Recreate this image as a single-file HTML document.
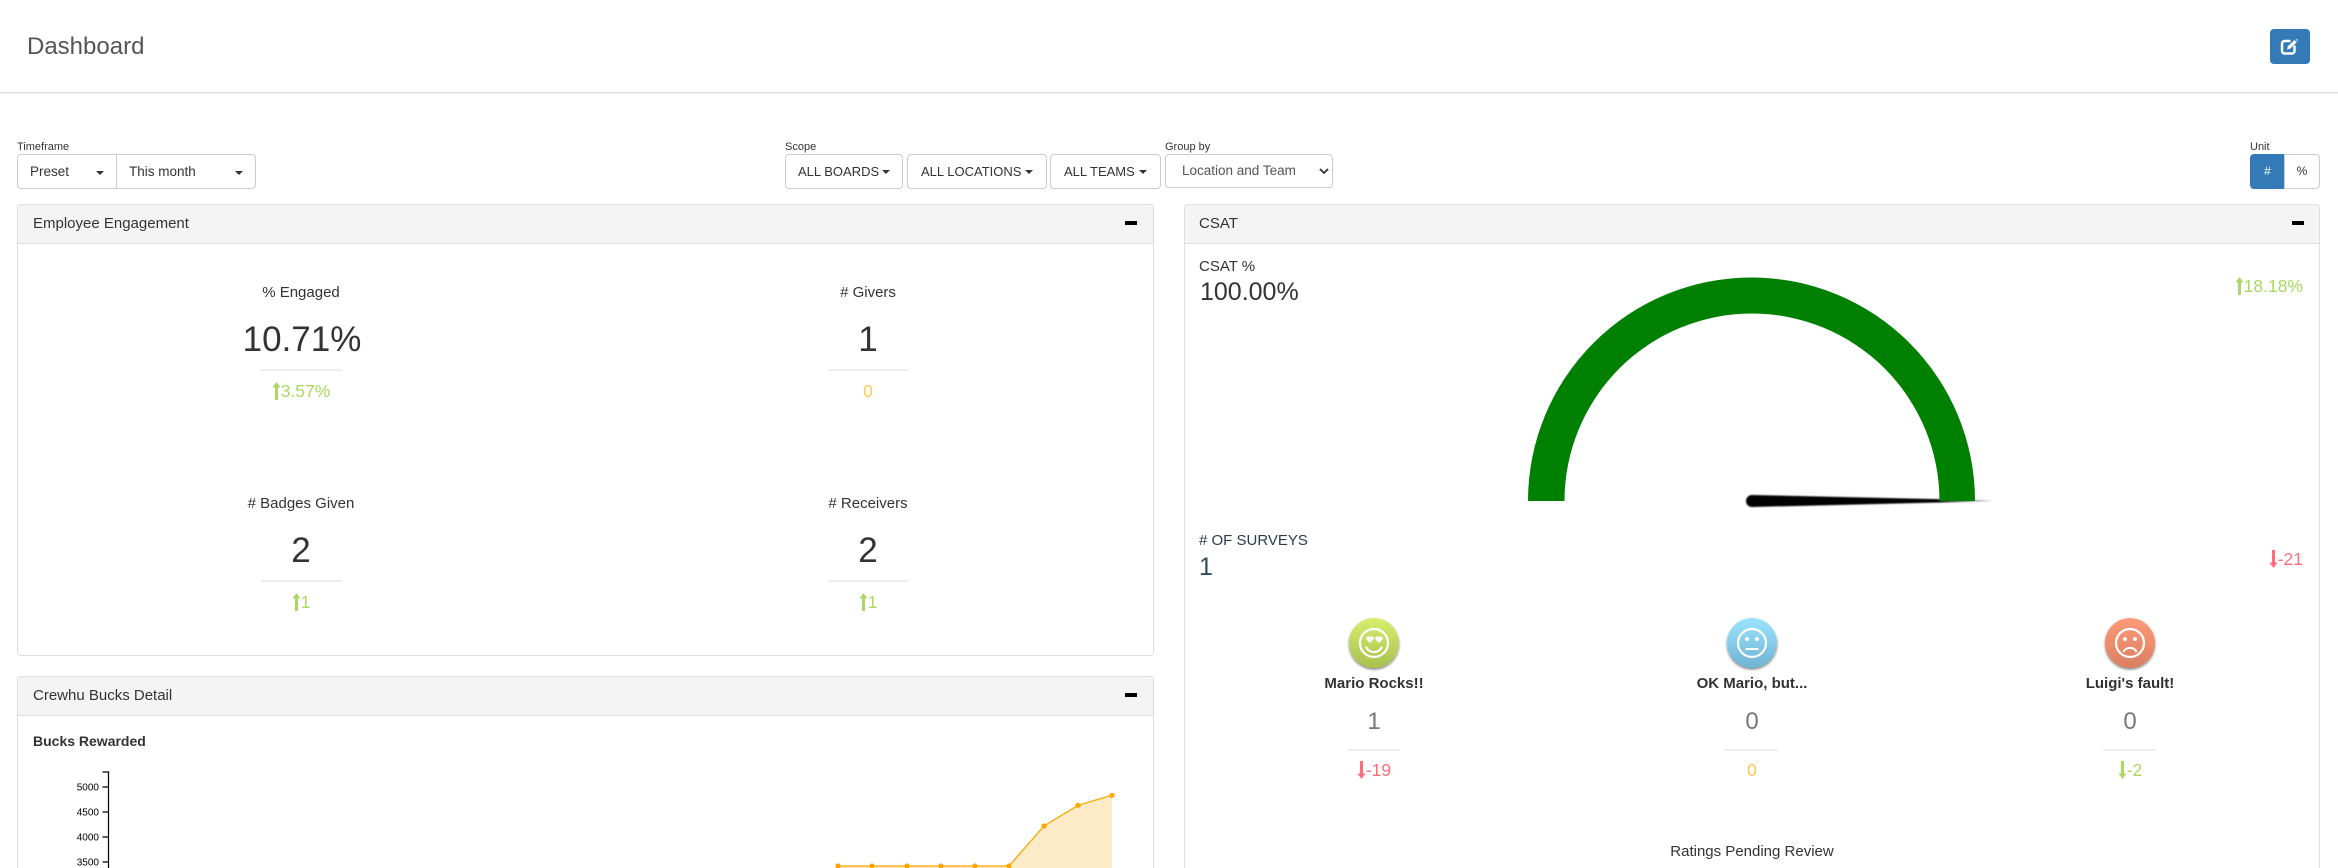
<!DOCTYPE html>
<html><head><meta charset="utf-8"><title>Dashboard</title>
<style>
html,body{margin:0;padding:0;background:#fff;width:2338px;height:868px;overflow:hidden}
body{position:relative;font-family:"Liberation Sans",Arial,sans-serif;color:#333;font-size:15px}
.a{position:absolute;white-space:nowrap}
.t{position:absolute;white-space:nowrap;line-height:20px;height:20px}
.c{position:absolute;white-space:nowrap;width:400px;text-align:center;display:flex;justify-content:center;align-items:center;height:30px;line-height:30px}
.btn{position:absolute;box-sizing:border-box;border:1px solid #ccc;border-radius:4px;background:#fff;height:35px;top:154px;font-size:13px;line-height:33px;white-space:nowrap}
.caret{position:absolute;width:0;height:0;border-top:4px solid #333;border-left:4px solid transparent;border-right:4px solid transparent}
.lab{position:absolute;font-size:11px;top:141px;line-height:12px;color:#333;white-space:nowrap}
.panel{position:absolute;box-sizing:border-box;border:1px solid #ddd;border-radius:4px;background:#fff;overflow:hidden}
.open{border-bottom:none;border-radius:4px 4px 0 0}
.ph{height:38px;background:#f4f4f4;border-bottom:1px solid #ddd;font-size:15px;line-height:38px;padding-left:15px;box-sizing:content-box}
.min{position:absolute;width:12px;height:4px;background:#000}
.hr{position:absolute;height:2px;background:#eee}
.g{color:#aad862}.r{color:#ff6b78}.y{color:#ffc94d}
.d{font-size:17.500px}
svg{display:block}
</style></head><body>

<div class="t" style="left:27px;top:37px;font-size:24px;line-height:20px;color:#555">Dashboard</div>
<div class="a" style="left:0;top:92px;width:2338px;height:1px;background:#ddd;box-shadow:0 1px 1px #f0f0f0"></div>
<div class="a" style="left:2270px;top:29px;width:40px;height:35px;background:#337ab7;border-radius:4px">
<svg width="40" height="35" viewBox="0 0 40 35"><g transform="translate(0.5 1)"><path d="M24 15.500V21a2.500 2.500 0 0 1-2.500 2.500h-7.500A2.500 2.500 0 0 1 11.500 21v-7.500A2.500 2.500 0 0 1 14 11h6" fill="none" stroke="#fff" stroke-width="2.400"/><path d="M16.500 19.500l.8-3.200 6.700-6.300 2.300 2.300-6.700 6.400z" fill="#fff"/><path d="M25 9.500l2-.3.300 2z" fill="#fff"/></g></svg></div>

<div class="lab" style="left:17px">Timeframe</div>
<div class="btn" style="left:17px;width:100px;border-radius:4px 0 0 4px;padding-left:12px;font-size:13.500px">Preset<i class="caret" style="left:78px;top:16px"></i></div>
<div class="btn" style="left:116px;width:140px;border-radius:0 4px 4px 0;padding-left:12px;font-size:13.500px">This month<i class="caret" style="left:118px;top:16px"></i></div>

<div class="lab" style="left:785px">Scope</div>
<div class="btn" style="left:785px;width:118px;padding-left:12px">ALL BOARDS<i class="caret" style="left:96px;top:15px"></i></div>
<div class="btn" style="left:907px;width:140px;padding-left:13px">ALL LOCATIONS<i class="caret" style="left:117px;top:15px"></i></div>
<div class="btn" style="left:1050px;width:111px;padding-left:13px">ALL TEAMS<i class="caret" style="left:88px;top:15px"></i></div>
<div class="lab" style="left:1165px">Group by</div>
<div class="btn" style="left:1165px;width:168px;height:34px;padding-left:16px;font-size:13.500px;line-height:32px;color:#555">Location and Team
<svg class="a" style="left:153px;top:13px" width="10" height="7" viewBox="0 0 10 7"><path d="M1 1l4 4 4-4" fill="none" stroke="#444" stroke-width="2"/></svg></div>

<div class="lab" style="left:2250px">Unit</div>
<div class="btn" style="left:2250px;width:35px;background:#337ab7;border-color:#337ab7;border-radius:4px 0 0 4px;color:#fff;text-align:center;font-size:12px">#</div>
<div class="btn" style="left:2284px;width:36px;border-radius:0 4px 4px 0;text-align:center;font-size:12px">%</div>

<div class="panel" style="left:17px;top:204px;width:1137px;height:452px"><div class="ph">Employee Engagement</div></div>
<div class="min" style="left:1125px;top:221px"></div>
<div class="panel open" style="left:17px;top:676px;width:1137px;height:192px"><div class="ph">Crewhu Bucks Detail</div></div>
<div class="min" style="left:1125px;top:693px"></div>
<div class="panel open" style="left:1184px;top:204px;width:1136px;height:664px"><div class="ph" style="padding-left:14px">CSAT</div></div>
<div class="min" style="left:2292px;top:221px"></div>

<!-- Engagement metrics -->
<div class="c" style="left:101px;top:278px">% Engaged</div>
<div class="c" style="left:102px;top:325px;font-size:35px">10.71%</div>
<div class="hr" style="left:261px;top:369px;width:81px"></div>
<div class="c g d" style="left:101px;top:376px"><svg width="9" height="18" viewBox="0 0 9 18"><path d="M4.500 0L8.500 5.500H6V18H3V5.500H.5z" fill="#aad862"/></svg>3.57%</div>

<div class="c" style="left:668px;top:278px"># Givers</div>
<div class="c" style="left:668px;top:325px;font-size:35px">1</div>
<div class="hr" style="left:828px;top:369px;width:81px"></div>
<div class="c y d" style="left:668px;top:376px">0</div>

<div class="c" style="left:101px;top:489px"># Badges Given</div>
<div class="c" style="left:101px;top:536px;font-size:35px">2</div>
<div class="hr" style="left:261px;top:580px;width:81px"></div>
<div class="c g d" style="left:101px;top:587px"><svg width="9" height="18" viewBox="0 0 9 18"><path d="M4.500 0L8.500 5.500H6V18H3V5.500H.5z" fill="#aad862"/></svg>1</div>

<div class="c" style="left:668px;top:489px"># Receivers</div>
<div class="c" style="left:668px;top:536px;font-size:35px">2</div>
<div class="hr" style="left:828px;top:580px;width:81px"></div>
<div class="c g d" style="left:668px;top:587px"><svg width="9" height="18" viewBox="0 0 9 18"><path d="M4.500 0L8.500 5.500H6V18H3V5.500H.5z" fill="#aad862"/></svg>1</div>

<!-- Bucks -->
<div class="t" style="left:33px;top:731px;font-size:14px;font-weight:bold">Bucks Rewarded</div>
<svg class="a" style="left:0;top:0" width="1154" height="868" viewBox="0 0 1154 868">
<path d="M838 866L872 866 907 866 941 866 975 866 1009 866 1044 826 1078 805.300 1112 795.300V868H838z" fill="#fdebc8"/>
<path d="M838 866L872 866 907 866 941 866 975 866 1009 866 1044 826 1078 805.300 1112 795.300" fill="none" stroke="#ffa500" stroke-width="1.300"/>
<g fill="#ffa500"><circle cx="838" cy="866" r="2.600"/><circle cx="872" cy="866" r="2.600"/><circle cx="907" cy="866" r="2.600"/><circle cx="941" cy="866" r="2.600"/><circle cx="975" cy="866" r="2.600"/><circle cx="1009" cy="866" r="2.600"/><circle cx="1044" cy="826" r="2.600"/><circle cx="1078" cy="805.300" r="2.600"/><circle cx="1112" cy="795.300" r="2.600"/></g>
<path d="M102.500 772H108.500V868M102.500 787H108.500M102.500 812H108.500M102.500 837H108.500M102.500 862H108.500" fill="none" stroke="#000" stroke-width="1.200"/>
<g font-family="'Liberation Sans',Arial,sans-serif" font-size="10" fill="#000" text-anchor="end"><text x="99" y="790.500">5000</text><text x="99" y="815.500">4500</text><text x="99" y="840.500">4000</text><text x="99" y="865.500">3500</text></g>
</svg>

<!-- CSAT -->
<div class="t" style="left:1199px;top:257px">CSAT %</div>
<div class="t" style="left:1200px;top:282px;font-size:25px">100.00%</div>
<div class="a g d" style="right:35px;top:271px;height:30px;line-height:30px;display:flex;align-items:center"><svg width="9" height="18" viewBox="0 0 9 18"><path d="M4.500 0L8.500 5.500H6V18H3V5.500H.5z" fill="#aad862"/></svg>18.18%</div>

<svg class="a" style="left:1500px;top:260px" width="520" height="260" viewBox="1500 260 520 260">
<defs><filter id="b" x="-5%" y="-100%" width="110%" height="300%"><feGaussianBlur stdDeviation="0.800"/></filter>
<linearGradient id="nd" gradientUnits="userSpaceOnUse" x1="1746" y1="0" x2="1992" y2="0"><stop offset="0" stop-color="#000"/><stop offset=".78" stop-color="#000"/><stop offset="1" stop-color="#000" stop-opacity=".1"/></linearGradient></defs>
<path d="M1752 495L1992 500.300V501.300L1752 507A6 6 0 0 1 1752 495Z" fill="url(#nd)" filter="url(#b)"/>
<path d="M1528 501A223.500 223.500 0 0 1 1975 501H1939.500A187.500 187.500 0 0 0 1564.500 501Z" fill="#008000"/>
</svg>

<div class="t" style="left:1199px;top:531px;color:#2a3b4c"># OF SURVEYS</div>
<div class="t" style="left:1199px;top:557px;font-size:25px;color:#2f4a5a">1</div>
<div class="a r d" style="right:35px;top:544px;height:30px;line-height:30px;display:flex;align-items:center"><svg width="9" height="18" viewBox="0 0 9 18"><path d="M4.500 18L8.500 12.500H6V0H3V12.500H.5z" fill="#ff6b78"/></svg>-21</div>

<!-- Faces -->
<svg class="a" style="left:1300px;top:600px" width="900" height="80" viewBox="1300 600 900 80">
<defs>
<linearGradient id="gg" x1="0" y1="0" x2="0" y2="1"><stop offset="0" stop-color="#d6ef6e"/><stop offset="1" stop-color="#a8c04f"/></linearGradient>
<linearGradient id="gb" x1="0" y1="0" x2="0" y2="1"><stop offset="0" stop-color="#9be4ff"/><stop offset="1" stop-color="#6fb3d3"/></linearGradient>
<linearGradient id="go" x1="0" y1="0" x2="0" y2="1"><stop offset="0" stop-color="#ff9a78"/><stop offset="1" stop-color="#d98062"/></linearGradient>
<filter id="s" x="-20%" y="-20%" width="140%" height="140%"><feDropShadow dx="0" dy="1.500" stdDeviation="1.200" flood-color="#000" flood-opacity=".5"/></filter>
</defs>
<circle cx="1374" cy="643" r="25" fill="url(#gg)" filter="url(#s)"/>
<circle cx="1374" cy="643" r="14" fill="none" stroke="#fff" stroke-width="2.200"/>
<path d="M1370 643l-3.400-3.400a2 2 0 0 1 3.400-2.400 2 2 0 0 1 3.400 2.400zM1379 643l-3.400-3.400a2 2 0 0 1 3.400-2.400 2 2 0 0 1 3.400 2.400z" fill="#fff"/>
<path d="M1366 646.500c2.500 7.500 13.500 7.500 16 0" fill="none" stroke="#fff" stroke-width="2"/>

<circle cx="1752" cy="643" r="25" fill="url(#gb)" filter="url(#s)"/>
<circle cx="1752" cy="643" r="14" fill="none" stroke="#fff" stroke-width="2.200"/>
<circle cx="1747" cy="639" r="2" fill="#fff"/><circle cx="1757" cy="639" r="2" fill="#fff"/>
<path d="M1745.500 649H1758.500" stroke="#fff" stroke-width="2"/>

<circle cx="2130" cy="643" r="25" fill="url(#go)" filter="url(#s)"/>
<circle cx="2130" cy="643" r="14" fill="none" stroke="#fff" stroke-width="2.200"/>
<circle cx="2125" cy="639" r="2" fill="#fff"/><circle cx="2135" cy="639" r="2" fill="#fff"/>
<path d="M2123.500 652c2-5.500 11-5.500 13 0" fill="none" stroke="#fff" stroke-width="2"/>
</svg>

<div class="c" style="left:1174px;top:669px;font-weight:bold;font-size:15px">Mario Rocks!!</div>
<div class="c" style="left:1174px;top:707px;font-size:24px;color:#777">1</div>
<div class="hr" style="left:1347px;top:749px;width:53px"></div>
<div class="c r d" style="left:1174px;top:755px"><svg width="9" height="18" viewBox="0 0 9 18"><path d="M4.500 18L8.500 12.500H6V0H3V12.500H.5z" fill="#ff6b78"/></svg>-19</div>

<div class="c" style="left:1552px;top:669px;font-weight:bold;font-size:15px">OK Mario, but...</div>
<div class="c" style="left:1552px;top:707px;font-size:24px;color:#777">0</div>
<div class="hr" style="left:1725px;top:749px;width:53px"></div>
<div class="c y d" style="left:1552px;top:755px">0</div>

<div class="c" style="left:1930px;top:669px;font-weight:bold;font-size:15px">Luigi's fault!</div>
<div class="c" style="left:1930px;top:707px;font-size:24px;color:#777">0</div>
<div class="hr" style="left:2103px;top:749px;width:53px"></div>
<div class="c g d" style="left:1930px;top:755px"><svg width="9" height="18" viewBox="0 0 9 18"><path d="M4.500 18L8.500 12.500H6V0H3V12.500H.5z" fill="#aad862"/></svg>-2</div>

<div class="c" style="left:1552px;top:837px">Ratings Pending Review</div>
</body></html>
